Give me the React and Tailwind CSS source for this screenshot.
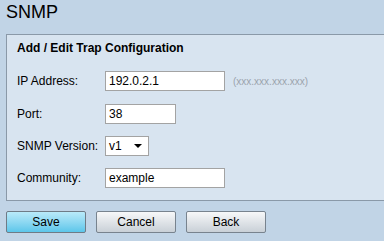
export default function App() {
  const font = { fontFamily: '"Liberation Sans", Arial, sans-serif' };
  const inputCls =
    "h-[20px] border border-[#a3a3a3] bg-white pl-[3px] text-[12px] leading-[18px] text-black flex items-center";
  return (
    <div
      className="w-[384px] h-[241px] overflow-hidden bg-[#c1d4e6] text-black"
      style={font}
    >
      <div className="h-[34px] pl-[6px] pt-[1px] text-[18px] leading-[22px] text-black">
        SNMP
      </div>
      <div className="ml-[6px] h-[167px] border-t border-l border-b border-[#8a99a8] bg-[#d8e4f0] pl-[10px] pt-[6px]">
        <div className="text-[12px] font-bold leading-[14px]">
          Add / Edit Trap Configuration
        </div>
        <div className="mt-[16px] flex items-center h-[20px]">
          <div className="w-[88px] text-[12px]">IP Address:</div>
          <div className={inputCls + " w-[120px]"}>192.0.2.1</div>
          <div className="ml-[8px] text-[10px] text-[#9ba3ad]">
            (xxx.xxx.xxx.xxx)
          </div>
        </div>
        <div className="mt-[13px] flex items-center h-[20px]">
          <div className="w-[88px] text-[12px]">Port:</div>
          <div className={inputCls + " w-[71px]"}>38</div>
        </div>
        <div className="mt-[12px] flex items-center h-[20px]">
          <div className="w-[88px] text-[12px]">SNMP Version:</div>
          <div className="h-[20px] w-[44px] border border-[#a3a3a3] bg-white pl-[3px] pr-[6px] flex items-center justify-between text-[12px]">
            <span>v1</span>
            <svg width="8" height="4" viewBox="0 0 8 4">
              <path d="M0 0 H8 L4 4 Z" fill="#000" />
            </svg>
          </div>
        </div>
        <div className="mt-[12px] flex items-center h-[20px]">
          <div className="w-[88px] text-[12px]">Community:</div>
          <div className={inputCls + " w-[120px]"}>example</div>
        </div>
      </div>
      <div className="mt-[10px] ml-[6px] flex gap-[10px]">
        <button className="w-[80px] h-[22px] rounded-[2px] border border-[#6f7b86] bg-gradient-to-b from-[#b9eaf9] to-[#5bc6ea] text-[12px] leading-[20px] text-black">
          Save
        </button>
        <button className="w-[80px] h-[22px] rounded-[2px] border border-[#78838e] bg-gradient-to-b from-[#f7f8f9] to-[#c9d0d7] text-[12px] leading-[20px] text-black">
          Cancel
        </button>
        <button className="w-[80px] h-[22px] rounded-[2px] border border-[#78838e] bg-gradient-to-b from-[#f7f8f9] to-[#c9d0d7] text-[12px] leading-[20px] text-black">
          Back
        </button>
      </div>
    </div>
  );
}
